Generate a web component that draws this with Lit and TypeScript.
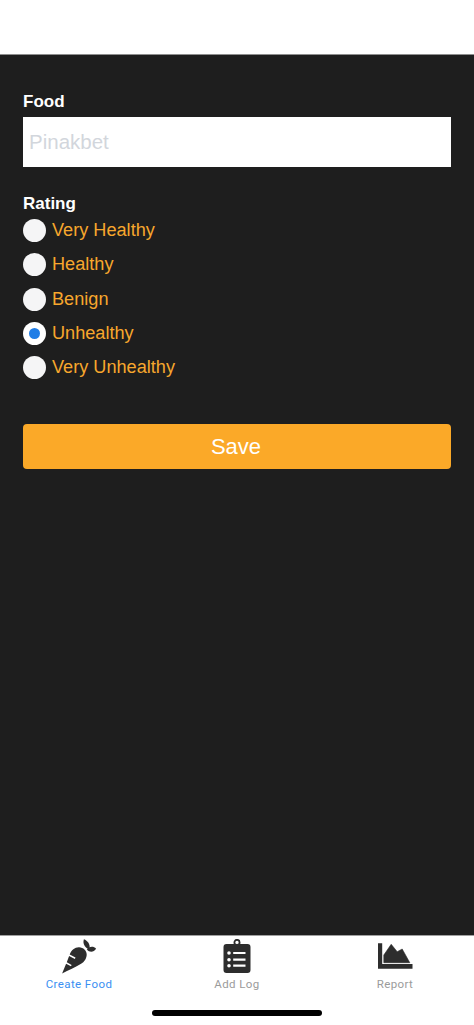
import { LitElement, html, css, svg } from "lit";
import { customElement, state } from "lit/decorators.js";

const OPTIONS = ["Very Healthy", "Healthy", "Benign", "Unhealthy", "Very Unhealthy"];

const TABS = [
  {
    label: "Create Food",
    vb: "0.5 0 35 35",
    icon: svg`
      <path d="M0.6 34.4L4.6 24.8L9.5 27.2L10.1 25.9L5.3 23.3L7.6 17L13.4 19.9L14 18.6L8.2 15.5C9.8 11 13.6 8 17.6 8.2C21.8 8.5 25.2 11.4 25.2 15.4C25.2 19.4 22.8 22.8 19.6 24.8C14 28.4 7 31.4 0.6 34.4Z"></path>
      <path d="M22.4 0.2C26 1.6 29 5 28 10.4C24.6 9.6 20.6 5.4 22.4 0.2Z"></path>
      <path d="M25.4 10.4C27.4 7.6 31.8 6.6 34.6 9.8C32.2 13.4 27.8 13.6 25.4 10.4Z"></path>`,
  },
  {
    label: "Add Log",
    vb: "-3.5 0 35 35",
    icon: svg`
      <circle class="ring" cx="13.5" cy="3.4" r="2.6"></circle>
      <path fill-rule="evenodd" d="M3 5H24A3 3 0 0 1 27 8V31A3 3 0 0 1 24 34H3A3 3 0 0 1 0 31V8A3 3 0 0 1 3 5ZM5.5 12.2A1.8 1.8 0 1 0 5.5 15.8A1.8 1.8 0 1 0 5.5 12.2ZM5.5 18.9A1.8 1.8 0 1 0 5.5 22.5A1.8 1.8 0 1 0 5.5 18.9ZM5.5 24.9A1.8 1.8 0 1 0 5.5 28.5A1.8 1.8 0 1 0 5.5 24.9ZM9.7 12.9V15.1H22V12.9ZM9.7 19.6V21.8H22V19.6ZM9.7 25.6V27.8H22V25.6Z"></path>`,
  },
  {
    label: "Report",
    vb: "0.5 -4 35 35",
    icon: svg`
      <path d="M0.3 0.3H4.7V21H35V25.7H0.3Z"></path>
      <path class="area" d="M6.3 19.7V12L13.7 1.3L19.7 8.7L24.7 6L32.3 19.7Z"></path>`,
  },
];

@customElement("app-root")
export class AppRoot extends LitElement {
  @state() selected = 3;
  @state() active = 0;

  static styles = css`
    :host {
      display: flex;
      flex-direction: column;
      width: 474px;
      height: 1025px;
      overflow: hidden;
      font-family: "Liberation Sans", Arial, sans-serif;
      background: #fff;
    }
    .header {
      height: 54px;
      flex: none;
      background: #fff;
      border-bottom: 1px solid #8e8e8e;
    }
    .main {
      flex: 1;
      background: #1e1e1e;
      padding: 37px 23px 0;
      display: flex;
      flex-direction: column;
    }
    .label {
      font-size: 17px;
      font-weight: 700;
      line-height: 20px;
      color: #fff;
    }
    .input {
      display: block;
      box-sizing: border-box;
      width: 428px;
      height: 50px;
      margin-top: 5px;
      padding: 0 6px;
      border: none;
      border-radius: 0;
      outline: none;
      background: #fff;
      font: 20.5px "Liberation Sans", Arial, sans-serif;
      color: #1e1e1e;
    }
    .input::placeholder {
      color: #d2d6dc;
      opacity: 1;
    }
    .rating {
      margin-top: 27px;
    }
    .options {
      display: flex;
      flex-direction: column;
      gap: 11.3px;
      margin-top: 5px;
    }
    .option {
      display: flex;
      align-items: center;
      gap: 6px;
      height: 23px;
      padding: 0;
      border: none;
      background: none;
      cursor: pointer;
      font: 18.15px "Liberation Sans", Arial, sans-serif;
      color: #f7a72d;
      text-align: left;
    }
    .dot {
      box-sizing: border-box;
      width: 23px;
      height: 23px;
      flex: none;
      border-radius: 50%;
      background: #f5f5f6;
      display: flex;
      align-items: center;
      justify-content: center;
    }
    .dot.on {
      background: #fff;
    }
    .dot.on::after {
      content: "";
      width: 11px;
      height: 11px;
      border-radius: 50%;
      background: #1f7de6;
    }
    .save {
      box-sizing: border-box;
      width: 428px;
      height: 45px;
      margin-top: 45px;
      padding: 0 2px 0 0;
      border: none;
      border-radius: 4px;
      background: #fba928;
      color: #fff;
      font: 22px "Liberation Sans", Arial, sans-serif;
      cursor: pointer;
    }
    .tabs {
      flex: none;
      height: 90px;
      background: #fff;
      display: flex;
      flex-direction: column;
      border-top: 1px solid #a0a0a0;
      box-sizing: border-box;
    }
    .tab-row {
      display: grid;
      grid-template-columns: repeat(3, 1fr);
      padding-top: 3px;
    }
    .tab {
      display: flex;
      flex-direction: column;
      align-items: center;
      padding: 0;
      border: none;
      background: none;
      cursor: pointer;
      font: 11.5px Roboto, "Liberation Sans", sans-serif;
      letter-spacing: 0.4px;
      line-height: 14px;
      color: #9b9b9b;
    }
    .tab.active {
      color: #3a8ff2;
    }
    .tab svg {
      display: block;
      width: 35px;
      height: 35px;
      fill: #2d2d2d;
      margin-bottom: 3px;
    }
    .tab svg .ring {
      fill: none;
      stroke: #2d2d2d;
      stroke-width: 1.8;
    }
    .tab svg .area {
      stroke: #2d2d2d;
      stroke-width: 0.6;
      stroke-linejoin: round;
    }
    .home {
      width: 170px;
      height: 6px;
      border-radius: 3px;
      background: #000;
      margin: 19px auto 0;
    }
  `;

  render() {
    return html`
      <div class="header"></div>
      <main class="main">
        <div class="label">Food</div>
        <input class="input" placeholder="Pinakbet" />
        <div class="label rating">Rating</div>
        <div class="options">
          ${OPTIONS.map(
            (o, i) => html`<button class="option" @click=${() => (this.selected = i)}>
              <span class="dot ${i === this.selected ? "on" : ""}"></span>${o}
            </button>`
          )}
        </div>
        <button class="save">Save</button>
      </main>
      <nav class="tabs">
        <div class="tab-row">
          ${TABS.map(
            (t, i) => html`<button class="tab ${i === this.active ? "active" : ""}" @click=${() => (this.active = i)}>
              <svg viewBox=${t.vb}>${t.icon}</svg>
              ${t.label}
            </button>`
          )}
        </div>
        <div class="home"></div>
      </nav>
    `;
  }
}
